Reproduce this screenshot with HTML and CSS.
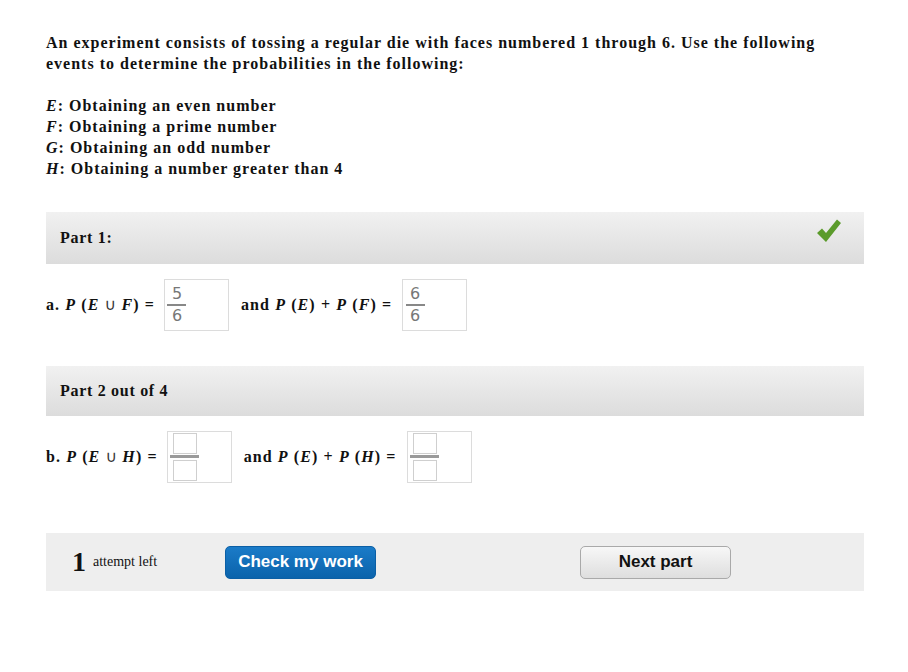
FILE: index.html
```html
<!DOCTYPE html>
<html>
<head>
<meta charset="utf-8">
<link rel="stylesheet" href="styles.css">
</head>
<body>
<div class="page">
  <p class="intro">An experiment consists of tossing a regular die with faces numbered 1 through 6. Use the following events to determine the probabilities in the following:</p>
  <div class="events">
    <div><i>E</i>: Obtaining an even number</div>
    <div><i>F</i>: Obtaining a prime number</div>
    <div><i>G</i>: Obtaining an odd number</div>
    <div><i>H</i>: Obtaining a number greater than 4</div>
  </div>

  <div class="part-head part1">
    <span>Part 1:</span>
    <svg class="check" width="26" height="26" viewBox="0 0 26 26"><path d="M1 15 L6 10.5 L10 15 L21 1.5 L25 5 L10 24 Z" fill="#5b9b2b"/></svg>
  </div>
  <div class="row row-a">
    <span class="expr">a. <i>P</i> (<i>E</i> <span class="cup">∪</span> <i>F</i>) =</span>
    <span class="fbox first"><span class="frac"><span class="num">5</span><span class="bar"></span><span class="den">6</span></span></span>
    <span class="expr and">and <i>P</i> (<i>E</i>) + <i>P</i> (<i>F</i>) =</span>
    <span class="fbox second"><span class="frac"><span class="num">6</span><span class="bar"></span><span class="den">6</span></span></span>
  </div>

  <div class="part-head part2"><span>Part 2 out of 4</span></div>
  <div class="row row-b">
    <span class="expr">b. <i>P</i> (<i>E</i> <span class="cup">∪</span> <i>H</i>) =</span>
    <span class="fbox first empty"><span class="efrac"><span class="ebox"></span><span class="ebar"></span><span class="ebox"></span></span></span>
    <span class="expr and">and <i>P</i> (<i>E</i>) + <i>P</i> (<i>H</i>) =</span>
    <span class="fbox second empty"><span class="efrac"><span class="ebox"></span><span class="ebar"></span><span class="ebox"></span></span></span>
  </div>

  <div class="footer">
    <div class="attempts"><span class="count">1</span><span class="label">attempt left</span></div>
    <button class="btn check-btn">Check my work</button>
    <button class="btn next-btn">Next part</button>
  </div>
</div>
</body>
</html>
```

FILE: styles.css
```css
html, body { margin: 0; padding: 0; background: #fff; }
.page {
  width: 818px;
  margin-left: 46px;
  padding-top: 32px;
  font-family: "Liberation Serif", "Times New Roman", serif;
  font-weight: bold;
  color: #111;
  letter-spacing: 1px;
}
.intro {
  margin: 0;
  font-size: 16px;
  line-height: 21px;
  padding-right: 40px;
}
.events {
  margin-top: 21px;
  font-size: 16px;
  line-height: 21px;
}
.part-head {
  display: flex;
  align-items: center;
  justify-content: space-between;
  box-sizing: border-box;
  padding: 0 22px 0 14px;
  background: linear-gradient(#f1f1f1, #dcdcdc);
  font-size: 16px;
  letter-spacing: 0.7px;
}
.part1 { margin-top: 33px; height: 52px; }
.part2 { margin-top: 35px; height: 50px; }
.check { display: block; margin-bottom: 14px; }
.row {
  display: flex;
  align-items: center;
  font-size: 16px;
  letter-spacing: 1.1px;
}
.row-a { margin-top: 14px; height: 53px; }
.row-b { margin-top: 14px; height: 53px; }
.expr { white-space: pre; }
.cup { font-weight: normal; font-family: "DejaVu Sans", sans-serif; font-size: 16px; color: #333; letter-spacing: 0; }
.fbox {
  box-sizing: border-box;
  width: 65px;
  height: 52px;
  border: 1px solid #dcdcdc;
  display: flex;
  align-items: center;
  padding-left: 2px;
  letter-spacing: 0;
}
.fbox.first { margin-left: 9px; }
.and { margin-left: 12px; }
.fbox.second { margin-left: 10px; }
.frac {
  display: flex;
  flex-direction: column;
  align-items: center;
  width: 20px;
  font-family: "DejaVu Sans", sans-serif;
  font-weight: normal;
  color: #777;
  font-size: 16px;
  line-height: 18px;
}
.bar { width: 19px; height: 2px; background: #888; margin: 1px 0 1px; }
.efrac {
  display: flex;
  flex-direction: column;
  align-items: center;
  width: 28px;
  padding-left: 1px;
}
.ebox { width: 24px; height: 21px; border: 1px solid #cfcfcf; box-sizing: border-box; }
.ebar { width: 29px; height: 3px; background: #9a9a9a; margin: 1px 0 2px; }
.footer {
  margin-top: 50px;
  height: 58px;
  background: #eeeeee;
  display: flex;
  align-items: center;
  padding-left: 26px;
  letter-spacing: 0;
}
.attempts { display: flex; align-items: center; width: 153px; }
.count { font-size: 28px; font-weight: bold; color: #111; line-height: 28px; }
.label { font-weight: normal; font-size: 14px; margin-left: 7px; color: #111; }
.btn {
  box-sizing: border-box;
  width: 151px;
  height: 33px;
  border-radius: 5px;
  font-family: "Liberation Sans", Arial, sans-serif;
  font-weight: bold;
  font-size: 17px;
  padding: 0;
  cursor: pointer;
}
.check-btn {
  background: linear-gradient(#1a7bc8, #0b63ab);
  border: 1px solid #0b5fa5;
  color: #fff;
}
.next-btn {
  margin-left: 204px;
  background: linear-gradient(#f7f7f7, #dedede);
  border: 1px solid #a9a9a9;
  color: #111;
}
```
